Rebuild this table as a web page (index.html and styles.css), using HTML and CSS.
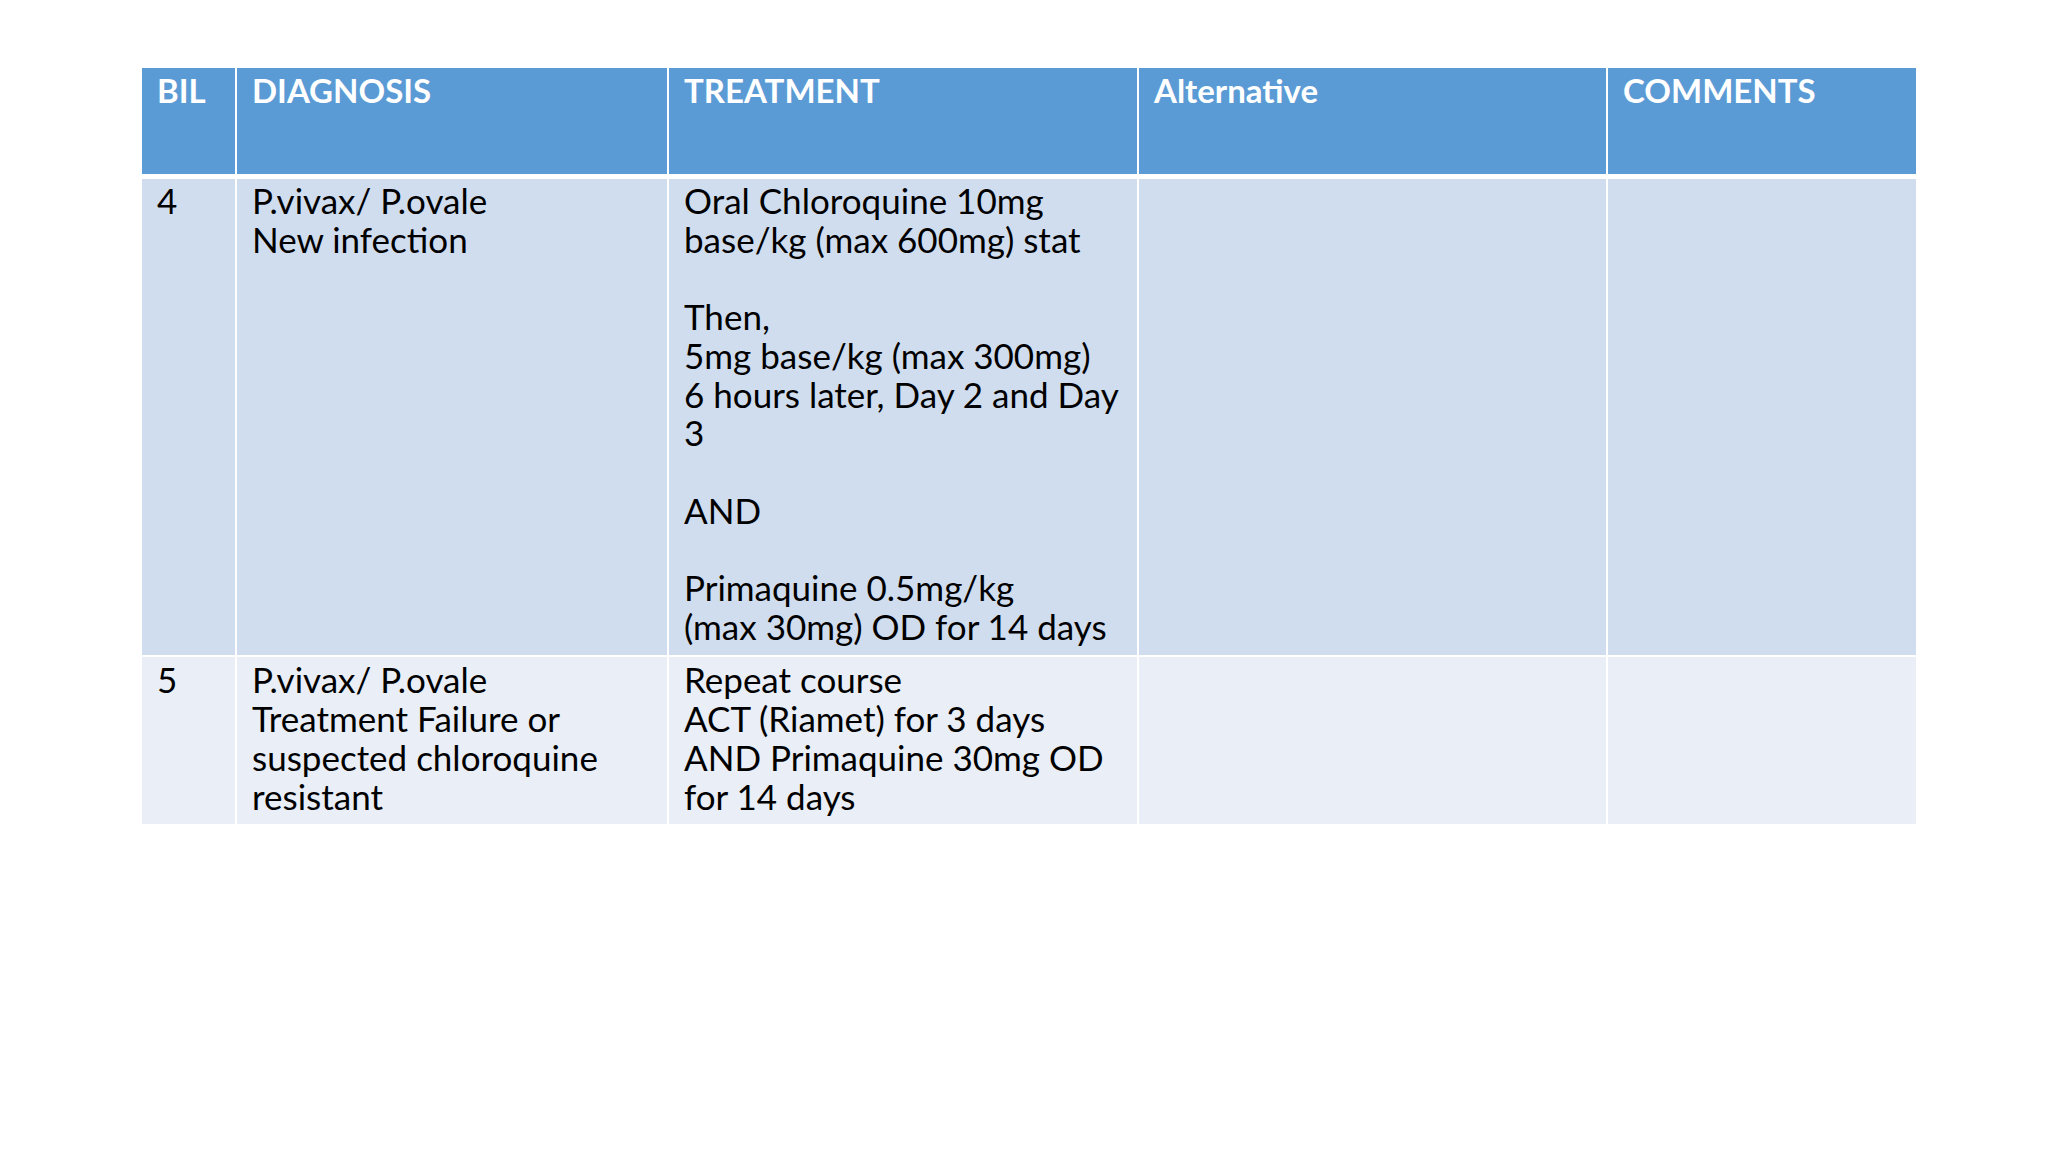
FILE: index.html
```html
<!DOCTYPE html>
<html>
<head>
<meta charset="utf-8">
<link rel="stylesheet" href="styles.css">
</head>
<body>
<div class="slide">
  <div class="table">
    <div class="row head">
      <div class="cell">BIL</div>
      <div class="cell">DIAGNOSIS</div>
      <div class="cell">TREATMENT</div>
      <div class="cell">Alternative</div>
      <div class="cell">COMMENTS</div>
    </div>
    <div class="row band1">
      <div class="cell">4</div>
      <div class="cell">P.vivax/ P.ovale<br>New infection</div>
      <div class="cell">Oral Chloroquine 10mg<br>base/kg (max 600mg) stat<br><br>Then,<br>5mg base/kg (max 300mg)<br>6 hours later, Day 2 and Day<br>3<br><br>AND<br><br>Primaquine 0.5mg/kg<br>(max 30mg) OD for 14 days</div>
      <div class="cell"></div>
      <div class="cell"></div>
    </div>
    <div class="row band2">
      <div class="cell">5</div>
      <div class="cell">P.vivax/ P.ovale<br>Treatment Failure or<br>suspected chloroquine<br>resistant</div>
      <div class="cell">Repeat course<br>ACT (Riamet) for 3 days<br>AND Primaquine 30mg OD<br>for 14 days</div>
      <div class="cell"></div>
      <div class="cell"></div>
    </div>
  </div>
</div>
</body>
</html>
```

FILE: styles.css
```css
html, body {
  margin: 0;
  padding: 0;
  background: #ffffff;
}
.slide {
  width: 2048px;
  height: 1152px;
  padding: 68px 0 0 142px;
  box-sizing: border-box;
  font-family: "Lato", "Carlito", "Liberation Sans", sans-serif;
}
.table {
  width: 1774px;
  display: flex;
  flex-direction: column;
  gap: 2px;
}
.row {
  display: grid;
  grid-template-columns: 93px 430px 468px 467px 308px;
  column-gap: 2px;
}
.cell {
  padding: 2px 15px 10px 15px;
  font-size: 35px;
  line-height: 38.7px;
  color: #000000;
  white-space: nowrap;
}
.band2 .cell {
  padding-top: 3px;
  padding-bottom: 9px;
}
.head {
  height: 106px;
  margin-bottom: 3px;
}
.head .cell {
  padding-top: 3px;
  background: #5b9bd5;
  color: #ffffff;
  font-weight: 700;
  font-size: 33px;
}
.band1 .cell {
  background: #d0ddee;
}
.band2 .cell {
  background: #e9eef7;
}
```
